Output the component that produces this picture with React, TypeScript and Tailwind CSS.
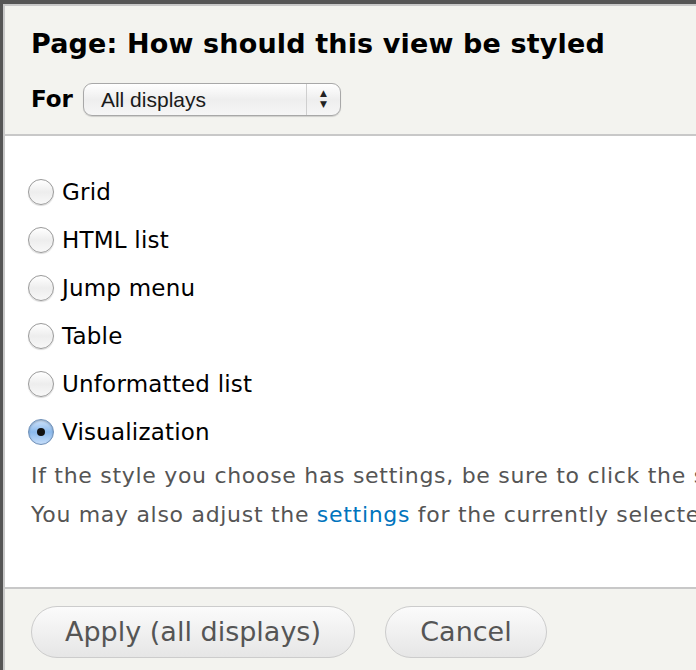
const styles = ["Grid", "HTML list", "Jump menu", "Table", "Unformatted list", "Visualization"];

const Radio = ({ checked }: { checked: boolean }) =>
  checked ? (
    <span className="flex h-[26px] w-[26px] shrink-0 items-center justify-center rounded-full border border-[#6d8fb8] bg-gradient-to-b from-[#cfe3fb] via-[#8bb9ec] to-[#c6defa] shadow-[inset_0_1px_2px_rgba(0,0,0,0.25)]">
      <span className="h-[8px] w-[8px] rounded-full bg-[#111]" />
    </span>
  ) : (
    <span className="h-[26px] w-[26px] shrink-0 rounded-full border border-[#9a9a9a] bg-gradient-to-b from-[#ffffff] via-[#ededed] to-[#f8f8f8] shadow-[0_1px_1px_rgba(0,0,0,0.15)]" />
  );

export default function App() {
  return (
    <div className="h-[670px] w-[696px] overflow-hidden bg-[#555] pl-[3px] pt-[4px] font-['DejaVu_Sans',sans-serif]">
      <div className="flex h-[666px] flex-col border-l-2 border-t-2 border-[#c8c8c8] bg-white">
        <div className="h-[130px] shrink-0 border-b-2 border-[#c8c8c8] bg-[#f3f3ef] pl-[26px] pt-[20px]">
          <h1 className="text-[27px] font-bold leading-[36px] tracking-[0.15px] text-black">Page: How should this view be styled</h1>
          <div className="mt-[20px] flex items-center gap-[10px]">
            <span className="text-[23px] font-bold text-black">For</span>
            <div className="flex h-[33px] w-[258px] items-center rounded-[9px] border border-[#a8a8a8] bg-gradient-to-b from-[#ffffff] via-[#eeeeee] to-[#f6f6f6] shadow-[0_1px_1px_rgba(0,0,0,0.15)]">
              <span className="flex-1 pl-[17px] font-['Liberation_Sans',sans-serif] text-[21px] text-[#1a1a1a]">All displays</span>
              <span className="flex h-full w-[34px] flex-col items-center justify-center gap-[2px] border-l border-[#cfcfcf] text-[9px] leading-[9px] text-[#222]">
                <span>▲</span>
                <span>▼</span>
              </span>
            </div>
          </div>
        </div>
        <div className="flex-1 pl-[23px] pt-[43px]">
          <div className="flex flex-col gap-[22px]">
            {styles.map((s) => (
              <label key={s} className="flex h-[26px] items-center gap-[8px] text-[23px] tracking-[0.2px] text-black">
                <Radio checked={s === "Visualization"} />
                <span>{s}</span>
              </label>
            ))}
          </div>
          <div className="mt-[11px] whitespace-nowrap pl-[3px] text-[22px] leading-[39px] tracking-[0.7px] text-[#555]">
            <p>If the style you choose has settings, be sure to click the settings button that will appear next.</p>
            <p>
              You may also adjust the <span className="text-[#0074bd]">settings</span> for the currently selected style.
            </p>
          </div>
        </div>
        <div className="flex h-[83px] shrink-0 items-start gap-[30px] border-t-2 border-[#c8c8c8] bg-[#f3f3ef] pl-[26px] pt-[17px]">
          <button className="h-[52px] w-[324px] rounded-full border border-[#cccccc] bg-gradient-to-b from-[#fbfbfb] to-[#e6e6e6] text-[27px] text-[#555]">
            Apply (all displays)
          </button>
          <button className="h-[52px] w-[162px] rounded-full border border-[#cccccc] bg-gradient-to-b from-[#fbfbfb] to-[#e6e6e6] text-[27px] text-[#555]">
            Cancel
          </button>
        </div>
      </div>
    </div>
  );
}
